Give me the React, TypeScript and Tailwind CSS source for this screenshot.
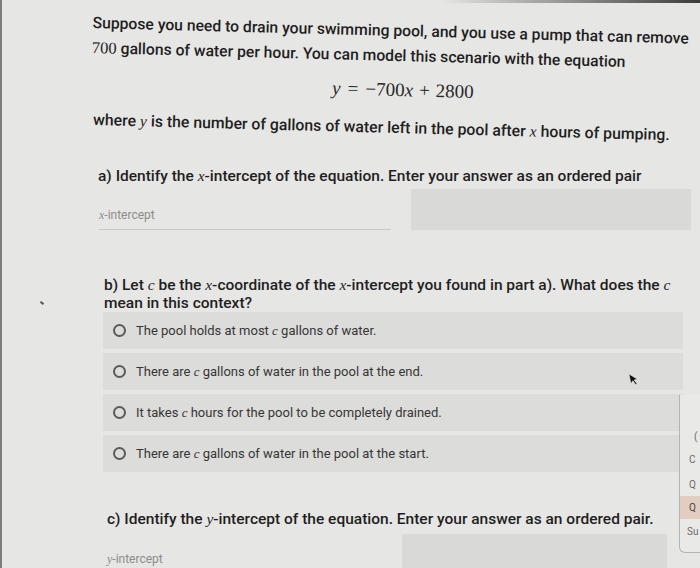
import type { ReactNode } from "react"

function M({ children }: { children: ReactNode }) {
    return <span className="italic font-normal [font-family:'Liberation_Serif','DejaVu_Serif',serif]">{children}</span>
}

function Option({ children }: { children: ReactNode }) {
    return (
        <div className="h-[37px] flex items-center pl-[10px] bg-[#dcdcda]">
            <span className="w-[13px] h-[13px] rounded-full border-2 border-[#5a5a5a] shrink-0" />
            <span className="ml-[10px] text-[13px] font-normal text-[#363636] whitespace-nowrap">{children}</span>
        </div>
    )
}

export default function App() {
    return (
        <div className="relative w-[700px] h-[568px] overflow-hidden bg-[#e6e6e4] border-l-2 border-[#7c7c7c] [font-family:Roboto,'Liberation_Sans',sans-serif]">
            <div className="absolute top-0 right-0 w-[260px] h-[3px] bg-gradient-to-r from-transparent to-[#3c3c3c]" />

            <div className="pl-[91px] pt-[10px] text-[#1f1f1f] font-medium">
                {/* intro, tilted like the photo */}
                <div className="origin-top-left rotate-[1.5deg]">
                    <p className="text-[15.7px] leading-[25px] whitespace-nowrap">
                        Suppose you need to drain your swimming pool, and you use a pump that can remove
                        <br />
                        <span className="[font-family:'Liberation_Serif',serif] font-normal text-[16.5px]">700</span> gallons of water per hour. You can model this scenario with the equation
                    </p>
                    <div className="mt-[8px] h-[28px] w-[620px] flex items-center justify-center pl-[4px] font-normal text-[19px] text-[#2a2a2a] [font-family:'Liberation_Serif','DejaVu_Serif',serif]">
                        <span className="italic">y</span>
                        <span className="mx-[7px]">=</span>
                        <span>−700</span>
                        <span className="italic">x</span>
                        <span className="mx-[6px]">+</span>
                        <span>2800</span>
                    </div>
                    <p className="mt-[11px] text-[15.8px] leading-[25px] pl-[3px] whitespace-nowrap">
                        where <M>y</M> is the number of gallons of water left in the pool after <M>x</M> hours of pumping.
                    </p>
                </div>

                <p className="mt-[31px] pl-[5px] text-[15.5px] leading-[25px] whitespace-nowrap">
                    a) Identify the <M>x</M>-intercept of the equation. Enter your answer as an ordered pair
                </p>
                <div className="flex pl-[6px] gap-[20px] h-[41px]">
                    <div className="w-[292px] border-b border-[#c9c9c7] pt-[19px] text-[12px] leading-[14px] text-[#8c8c8a] font-normal">
                        <M>x</M>-intercept
                    </div>
                    <div className="w-[280px] bg-[#d9d9d7]" />
                </div>

                <p className="mt-[46px] pl-[11px] text-[15.5px] leading-[18px] whitespace-nowrap">
                    b) Let <M>c</M> be the <M>x</M>-coordinate of the <M>x</M>-intercept you found in part a). What does the <M>c</M>
                    <br />
                    mean in this context?
                </p>
                <div className="mt-[0px] ml-[10px] w-[580px] flex flex-col gap-[4px]">
                    <Option>The pool holds at most <M>c</M> gallons of water.</Option>
                    <Option>There are <M>c</M> gallons of water in the pool at the end.</Option>
                    <Option>It takes <M>c</M> hours for the pool to be completely drained.</Option>
                    <Option>There are <M>c</M> gallons of water in the pool at the start.</Option>
                </div>

                <p className="mt-[34px] pl-[14px] text-[15.5px] leading-[25px] whitespace-nowrap">
                    c) Identify the <M>y</M>-intercept of the equation. Enter your answer as an ordered pair.
                </p>
                <div className="mt-[2px] flex pl-[14px] gap-[15px] h-[40px]">
                    <div className="w-[280px] pt-[18px] text-[12px] leading-[14px] text-[#8c8c8a] font-normal">
                        <M>y</M>-intercept
                    </div>
                    <div className="w-[265px] bg-[#d9d9d7]" />
                </div>
            </div>

            {/* side panel peeking in from the right */}
            <div className="absolute right-0 top-[395px] w-[21px] h-[158px] border-l border-b border-[#b4b4b2] rounded-bl-md bg-[#e9e9e7] flex flex-col text-[10px] text-[#6a6a6a] font-normal">
                <div className="h-[24px] mt-[29px] flex items-center pl-[14px]">(</div>
                <div className="h-[26px] -mt-[2px] flex items-center pl-[9px]">C</div>
                <div className="h-[24px] flex items-center pl-[9px]">Q</div>
                <div className="h-[23px] flex items-center pl-[9px] bg-[#e3cdc1] text-[#444]">Q</div>
                <div className="h-[25px] flex items-center pl-[7px]">Su</div>
            </div>

            {/* mouse pointer */}
            <svg className="absolute left-[627px] top-[372px]" width="10" height="14" viewBox="0 0 10 14">
                <path d="M1 1 L1 11 L3.5 8.5 L5.5 13 L7 12.3 L5 8 L8.5 8 Z" fill="#111" stroke="#eee" strokeWidth="0.6" transform="rotate(-12 5 7)" />
            </svg>

            {/* speck on the screen */}
            <span className="absolute left-[38px] top-[302px] w-[4px] h-[2px] bg-[#555] rotate-[40deg]" />
        </div>
    )
}
